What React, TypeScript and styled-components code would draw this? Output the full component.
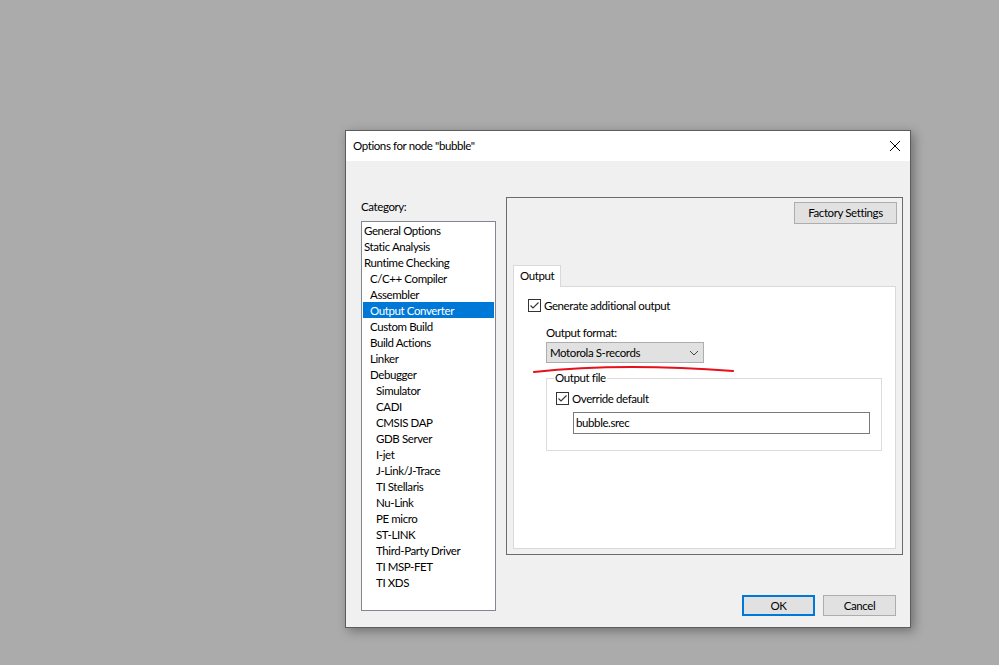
import { createGlobalStyle, styled } from "styled-components";

const GlobalStyle = createGlobalStyle`
  html, body {
    margin: 0;
    padding: 0;
    background: #ababab;
    font-family: Lato, "Noto Sans", "Liberation Sans", sans-serif;
    font-size: 11.5px;
    letter-spacing: -0.4px;
    color: #000;
  }
`;

interface CategoryItem {
  label: string;
  level: number;
}

const categories: CategoryItem[] = [
  { label: "General Options", level: 0 },
  { label: "Static Analysis", level: 0 },
  { label: "Runtime Checking", level: 0 },
  { label: "C/C++ Compiler", level: 1 },
  { label: "Assembler", level: 1 },
  { label: "Output Converter", level: 1 },
  { label: "Custom Build", level: 1 },
  { label: "Build Actions", level: 1 },
  { label: "Linker", level: 1 },
  { label: "Debugger", level: 1 },
  { label: "Simulator", level: 2 },
  { label: "CADI", level: 2 },
  { label: "CMSIS DAP", level: 2 },
  { label: "GDB Server", level: 2 },
  { label: "I-jet", level: 2 },
  { label: "J-Link/J-Trace", level: 2 },
  { label: "TI Stellaris", level: 2 },
  { label: "Nu-Link", level: 2 },
  { label: "PE micro", level: 2 },
  { label: "ST-LINK", level: 2 },
  { label: "Third-Party Driver", level: 2 },
  { label: "TI MSP-FET", level: 2 },
  { label: "TI XDS", level: 2 },
];

const Page = styled.div`
  height: 665px;
  box-sizing: border-box;
  padding: 130px 0 0 345px;
`;

const Dialog = styled.div`
  position: relative;
  width: 566px;
  height: 498px;
  box-sizing: border-box;
  border: 1px solid #5c5c5c;
  background: #f0f0f0;
  box-shadow: 3px 3px 10px rgba(0, 0, 0, 0.35);
  display: flex;
  flex-direction: column;
`;

const TitleBar = styled.div`
  height: 30px;
  flex: none;
  background: #fff;
  display: flex;
  align-items: center;
  justify-content: space-between;
  padding: 0 9px 0 7px;
  .title {
    line-height: 16px;
  }
`;

const Body = styled.div`
  flex: 1;
  display: flex;
  padding: 36px 7px 0 15px;
`;

const LeftCol = styled.div`
  flex: none;
  width: 135px;
  margin-top: 2px;
  display: flex;
  flex-direction: column;
`;

const FieldLabel = styled.div`
  line-height: 16px;
  height: 16px;
`;

const ListBox = styled.div`
  margin-top: 6px;
  height: 390px;
  box-sizing: border-box;
  border: 1px solid #828790;
  background: #fff;
  padding: 0 1px;
`;

const ListItem = styled.div<{ $level: number; $selected?: boolean }>`
  height: 16px;
  line-height: 17px;
  white-space: nowrap;
  padding-left: ${(p) => 1 + p.$level * 6}px;
  background: ${(p) => (p.$selected ? "#0078d7" : "transparent")};
  color: ${(p) => (p.$selected ? "#fff" : "#000")};
`;

const RightCol = styled.div`
  flex: none;
  margin-left: 10px;
  width: 397px;
  display: flex;
  flex-direction: column;
`;

const Panel = styled.div`
  height: 358px;
  flex: none;
  box-sizing: border-box;
  border: 1px solid #6b6b6b;
  padding: 4px 6px 5px 6px;
  display: flex;
  flex-direction: column;
  .top_row {
    display: flex;
    justify-content: flex-end;
    margin-right: -1px;
  }
`;

const PushButton = styled.button<{ $width: number; $height: number; $default?: boolean }>`
  width: ${(p) => p.$width}px;
  height: ${(p) => p.$height}px;
  box-sizing: border-box;
  margin: 0;
  padding: 0;
  background: #e1e1e1;
  border: ${(p) => (p.$default ? "2px solid #0078d7" : "1px solid #adadad")};
  font-family: inherit;
  font-size: 11.5px;
  letter-spacing: -0.4px;
  line-height: 16px;
  color: #000;
  outline: none;
`;

const TabStrip = styled.div`
  margin-top: 41px;
  display: flex;
  height: 21px;
`;

const Tab = styled.div`
  position: relative;
  z-index: 1;
  height: 22px;
  box-sizing: border-box;
  padding: 0 6px;
  line-height: 20px;
  background: #fff;
  border: 1px solid #d9d9d9;
  border-bottom: none;
`;

const TabPage = styled.div`
  flex: 1;
  box-sizing: border-box;
  border: 1px solid #d9d9d9;
  background: #fff;
  padding: 12px 12px 12px 14px;
`;

const CheckRow = styled.label<{ $indent?: number; $top?: number }>`
  display: flex;
  align-items: center;
  gap: 3px;
  height: 13px;
  line-height: 13px;
  margin-left: ${(p) => p.$indent ?? 0}px;
  margin-top: ${(p) => p.$top ?? 0}px;
`;

const Indented = styled.div`
  margin-left: 18px;
  .fmt_label {
    margin-top: 13px;
    line-height: 16px;
  }
`;

const Combo = styled.div`
  margin-top: 1px;
  width: 158px;
  height: 21px;
  box-sizing: border-box;
  border: 1px solid #adadad;
  background: #e1e1e1;
  display: flex;
  align-items: center;
  justify-content: space-between;
  padding: 0 4px 0 3px;
`;

const GroupBox = styled.fieldset`
  margin: 8px 0 0 0;
  width: 336px;
  box-sizing: border-box;
  border: 1px solid #dcdcdc;
  padding: 0 0 16px 7px;
  legend {
    padding: 0 1px;
    line-height: 14px;
  }
`;

const TextInput = styled.div`
  margin: 7px 0 0 19px;
  width: 297px;
  height: 22px;
  box-sizing: border-box;
  border: 1px solid #7a7a7a;
  background: #fff;
  padding: 0 2px;
  line-height: 20px;
`;

const ButtonRow = styled.div`
  margin-top: 40px;
  display: flex;
  align-items: flex-start;
  justify-content: flex-end;
  gap: 8px;
  padding-right: 7px;
`;

const Annotation = styled.svg`
  position: absolute;
  left: 184px;
  top: 228px;
  pointer-events: none;
`;

const CloseIcon = () => (
  <svg width="12" height="12" viewBox="0 0 12 12">
    <path d="M1 1 L11 11 M11 1 L1 11" stroke="#000" strokeWidth="1" />
  </svg>
);

const CheckBox = () => (
  <svg width="13" height="13" viewBox="0 0 13 13">
    <rect x="0.5" y="0.5" width="12" height="12" fill="#fff" stroke="#333" />
    <path d="M2.5 6.5 L5 9 L10.5 3.5" fill="none" stroke="#333" strokeWidth="1.1" />
  </svg>
);

const Chevron = () => (
  <svg width="10" height="6" viewBox="0 0 10 6">
    <path d="M1 1 L5 5 L9 1" fill="none" stroke="#444" strokeWidth="1" />
  </svg>
);

export default function App() {
  return (
    <Page>
      <GlobalStyle />
      <Dialog>
        <TitleBar>
          <span className="title">Options for node "bubble"</span>
          <CloseIcon />
        </TitleBar>
        <Body>
          <LeftCol>
            <FieldLabel>Category:</FieldLabel>
            <ListBox>
              {categories.map((c) => (
                <ListItem key={c.label} $level={c.level} $selected={c.label === "Output Converter"}>
                  {c.label}
                </ListItem>
              ))}
            </ListBox>
          </LeftCol>
          <RightCol>
            <Panel>
              <div className="top_row">
                <PushButton $width={103} $height={22}>Factory Settings</PushButton>
              </div>
              <TabStrip>
                <Tab>Output</Tab>
              </TabStrip>
              <TabPage>
                <CheckRow>
                  <CheckBox />
                  <span>Generate additional output</span>
                </CheckRow>
                <Indented>
                  <div className="fmt_label">Output format:</div>
                  <Combo>
                    <span>Motorola S-records</span>
                    <Chevron />
                  </Combo>
                  <GroupBox>
                    <legend>Output file</legend>
                    <CheckRow $indent={2} $top={7}>
                      <CheckBox />
                      <span>Override default</span>
                    </CheckRow>
                    <TextInput>bubble.srec</TextInput>
                  </GroupBox>
                </Indented>
              </TabPage>
            </Panel>
            <ButtonRow>
              <PushButton $width={73} $height={21} $default>OK</PushButton>
              <PushButton $width={73} $height={21}>Cancel</PushButton>
            </ButtonRow>
          </RightCol>
        </Body>
        <Annotation width="210" height="16" viewBox="0 0 210 16">
          <path d="M4 13 Q 90 3.5 203 12" fill="none" stroke="#e8101a" strokeWidth="2.2" strokeLinecap="round" />
        </Annotation>
      </Dialog>
    </Page>
  );
}
